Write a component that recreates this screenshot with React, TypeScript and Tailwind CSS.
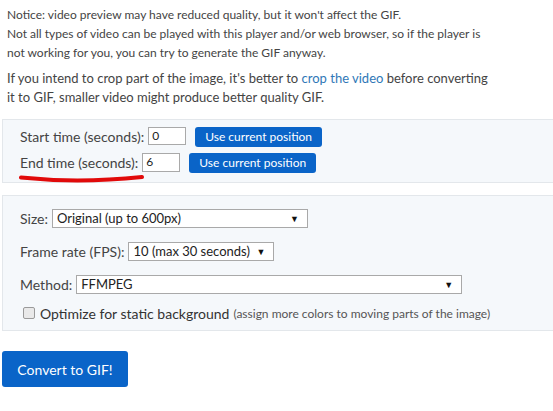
import React from "react";

function FakeSelect({ value, width }: { value: string; width: string }) {
  return (
    <div
      className={`${width} flex h-[19px] items-center justify-between border border-[#a9a9a9] bg-white pl-[4px] pr-[8px] text-[13px] text-[#222]`}
    >
      <span>{value}</span>
      <span className="text-[9px] text-[#111]">▼</span>
    </div>
  );
}

function BlueButton({ children }: { children: React.ReactNode }) {
  return (
    <button className="h-[20px] rounded-[3px] bg-[#0a64c8] px-[10px] text-[12px] leading-none text-white">
      {children}
    </button>
  );
}

export default function App() {
  return (
    <div className="min-h-[411px] w-[553px] overflow-hidden bg-white font-['Lato',sans-serif] text-[14px] text-[#444]">
      <div className="whitespace-nowrap px-[7px] pt-[5px] leading-[19px]">
        <p className="text-[12px]">Notice: video preview may have reduced quality, but it won't affect the GIF.</p>
        <p className="text-[12px]">
          Not all types of video can be played with this player and/or web browser, so if the player is
          <br />
          not working for you, you can try to generate the GIF anyway.
        </p>
        <p className="mt-[7px] text-[13px]">
          If you intend to crop part of the image, it's better to{" "}
          <a className="text-[#2f78b7]">crop the video</a> before converting
          <br />
          it to GIF, smaller video might produce better quality GIF.
        </p>
      </div>

      <section className="relative ml-[2px] mt-[12px] border border-r-0 border-[#e3e7eb] bg-[#f5f8fb] pb-[10px] pl-[17px] pt-[6px]">
        <div className="flex h-[20px] items-center">
          <span>Start time (seconds):</span>
          <div className="ml-[4px] flex h-[18px] w-[38px] items-center border border-[#a9a9a9] bg-white pl-[3px] text-[12px] text-[#222]">
            0
          </div>
          <div className="ml-[9px]">
            <BlueButton>Use current position</BlueButton>
          </div>
        </div>
        <div className="mt-[6px] flex h-[20px] items-center">
          <span>End time (seconds):</span>
          <div className="ml-[4px] flex h-[19px] w-[38px] items-center border border-[#a9a9a9] bg-white pl-[3px] text-[12px] text-[#222]">
            6
          </div>
          <div className="ml-[9px]">
            <BlueButton>Use current position</BlueButton>
          </div>
        </div>
        <svg className="absolute left-[15px] top-[54px]" width="128" height="10" viewBox="0 0 128 10">
          <path
            d="M3 3.5 Q 60 9.5 124 3"
            fill="none"
            stroke="#e10a0a"
            strokeWidth="4"
            strokeLinecap="round"
          />
        </svg>
      </section>

      <section className="ml-[2px] mt-[12px] border border-r-0 border-[#e3e7eb] bg-[#f5f8fb] pb-[7px] pl-[17px] pt-[13px] leading-[19px]">
        <div className="flex h-[19px] items-center gap-[4px]">
          <span>Size:</span>
          <FakeSelect value="Original (up to 600px)" width="w-[256px]" />
        </div>
        <div className="mt-[14px] flex h-[19px] items-center gap-[4px]">
          <span>Frame rate (FPS):</span>
          <FakeSelect value="10 (max 30 seconds)" width="w-[146px]" />
        </div>
        <div className="mt-[14px] flex h-[19px] items-center gap-[4px]">
          <span>Method:</span>
          <FakeSelect value="FFMPEG" width="w-[386px]" />
        </div>
        <div className="mt-[9px] flex h-[20px] items-center">
          <span className="ml-[3px] mr-[5px] h-[12px] w-[12px] rounded-[2px] border border-[#9a9a9a] bg-[#e9e9e9]" />
          <span className="text-[14px] text-[#333]">Optimize for static background</span>
          <span className="ml-[4px] text-[12px] text-[#555]">(assign more colors to moving parts of the image)</span>
        </div>
      </section>

      <div className="ml-[2px] mt-[20px]">
        <button className="h-[36px] w-[126px] rounded-[3px] bg-[#0a64c8] text-[14px] text-white">
          Convert to GIF!
        </button>
      </div>
    </div>
  );
}
